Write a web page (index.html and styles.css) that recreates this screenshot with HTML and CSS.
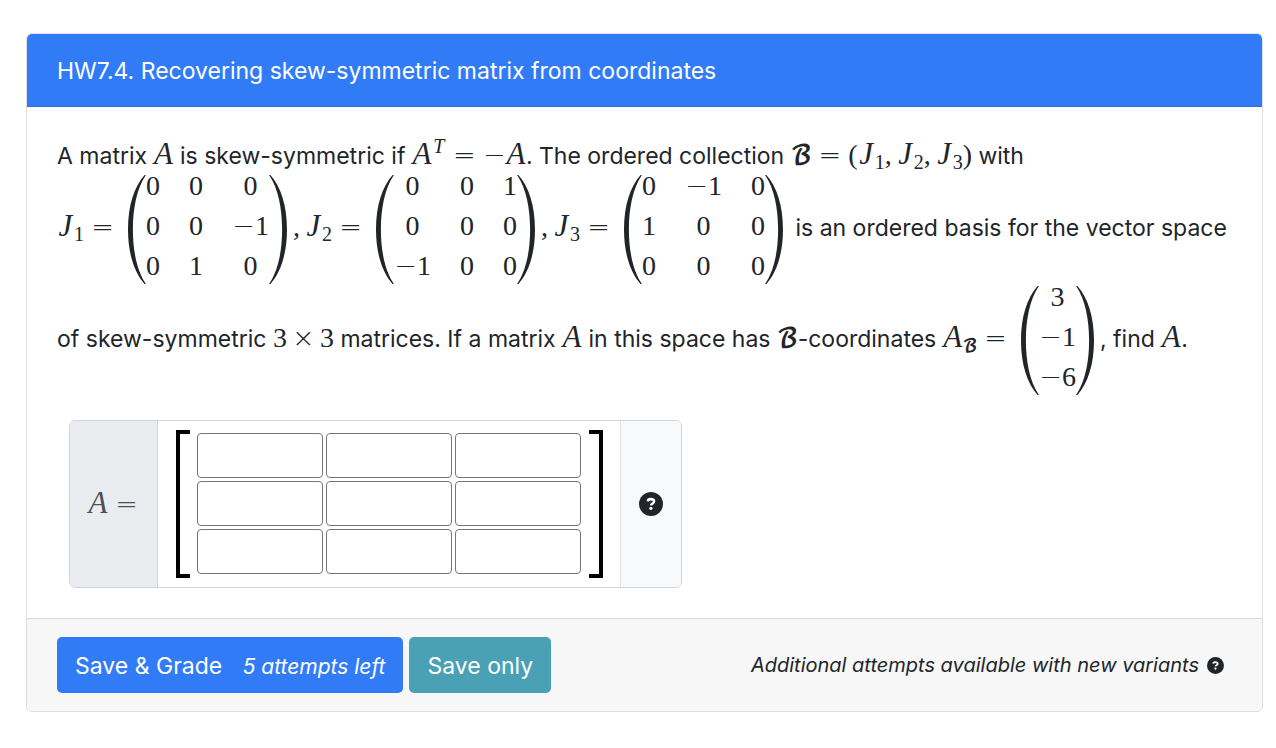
FILE: index.html
```html
<!DOCTYPE html>
<html lang="en">
<head>
<meta charset="UTF-8">
<meta name="viewport" content="width=device-width, initial-scale=1.0">
<title>HW7.4. Recovering skew-symmetric matrix from coordinates</title>
<link rel="stylesheet" href="styles.css">
</head>
<body>
<svg class="defs" aria-hidden="true">
  <symbol id="paren" viewBox="0 0 18 109">
    <path d="M16.6 0H17.9C8.500 14 4.900 34 4.900 54.500S8.500 95 17.900 109H16.600C6 97 0 78 0 54.500S6 12 16.600 0Z" fill="currentColor"/>
  </symbol>
  <symbol id="help" viewBox="0 0 512 512">
    <circle cx="256" cy="256" r="256" fill="currentColor"/>
    <path d="M188 200C190 168 214 152 252 152C296 152 322 170 322 202C322 244 262 244 256 286" fill="none" stroke="#fff" stroke-width="54"/>
    <circle cx="254" cy="348" r="34" fill="#fff"/>
  </symbol>
</svg>
<form class="card">
  <div class="card-header"><h1>HW7.4. Recovering skew-symmetric matrix from coordinates</h1></div>
  <div class="card-body">
    <p class="question">
      A matrix <span class="math"><i>A</i></span> is skew-symmetric if
      <span class="math"><i>A</i><sup><i>T</i></sup><span class="rel">=</span><span class="minus">−</span><i>A</i></span>. The ordered collection
      <span class="math"><span class="cal">ℬ</span><span class="rel">=</span>(<i class="j">J</i><sub>1</sub><span class="comma">,</span><i class="j">J</i><sub>2</sub><span class="comma">,</span><i class="j">J</i><sub>3</sub>)</span> with
      <span class="math"><i class="j">J</i><sub>1</sub><span class="rel">=</span><span class="matrix">
        <svg class="paren"><use href="#paren"/></svg>
        <span class="cells">
          <span>0</span><span>0</span><span>0</span>
          <span>0</span><span>0</span><span><span class="minus">−</span>1</span>
          <span>0</span><span>1</span><span>0</span>
        </span>
        <svg class="paren right"><use href="#paren"/></svg>
      </span><span class="comma">,</span><i class="j">J</i><sub>2</sub><span class="rel">=</span><span class="matrix">
        <svg class="paren"><use href="#paren"/></svg>
        <span class="cells">
          <span>0</span><span>0</span><span>1</span>
          <span>0</span><span>0</span><span>0</span>
          <span><span class="minus">−</span>1</span><span>0</span><span>0</span>
        </span>
        <svg class="paren right"><use href="#paren"/></svg>
      </span><span class="comma">,</span><i class="j">J</i><sub>3</sub><span class="rel">=</span><span class="matrix">
        <svg class="paren"><use href="#paren"/></svg>
        <span class="cells">
          <span>0</span><span><span class="minus">−</span>1</span><span>0</span>
          <span>1</span><span>0</span><span>0</span>
          <span>0</span><span>0</span><span>0</span>
        </span>
        <svg class="paren right"><use href="#paren"/></svg>
      </span></span>
      is an ordered basis for the vector space of skew-symmetric <span class="math">3<span class="times">×</span>3</span> matrices. If a matrix
      <span class="math"><i>A</i></span> in this space has <span class="math"><span class="cal">ℬ</span></span>-coordinates
      <span class="math"><i>A</i><sub><span class="cal">ℬ</span></sub><span class="rel">=</span><span class="matrix">
        <svg class="paren"><use href="#paren"/></svg>
        <span class="cells column">
          <span>3</span>
          <span><span class="minus">−</span>1</span>
          <span><span class="minus">−</span>6</span>
        </span>
        <svg class="paren right"><use href="#paren"/></svg>
      </span></span>, find <span class="math"><i>A</i></span>.
    </p>

    <div class="answer">
      <div class="answer-label"><span class="math"><i>A</i><span class="rel">=</span></span></div>
      <div class="answer-matrix">
        <span class="bracket"></span>
        <div class="inputs">
          <input type="text" name="a11" aria-label="Row 1, column 1">
          <input type="text" name="a12" aria-label="Row 1, column 2">
          <input type="text" name="a13" aria-label="Row 1, column 3">
          <input type="text" name="a21" aria-label="Row 2, column 1">
          <input type="text" name="a22" aria-label="Row 2, column 2">
          <input type="text" name="a23" aria-label="Row 2, column 3">
          <input type="text" name="a31" aria-label="Row 3, column 1">
          <input type="text" name="a32" aria-label="Row 3, column 2">
          <input type="text" name="a33" aria-label="Row 3, column 3">
        </div>
        <span class="bracket close"></span>
      </div>
      <button type="button" class="answer-help" aria-label="Help"><svg class="icon"><use href="#help"/></svg></button>
    </div>
  </div>
  <div class="card-footer">
    <button type="submit" class="btn btn-primary">Save &amp; Grade <em>5 attempts left</em></button>
    <button type="submit" class="btn btn-info">Save only</button>
    <span class="variants"><em>Additional attempts available with new variants</em>
      <button type="button" class="variants-help" aria-label="About variants"><svg class="icon"><use href="#help"/></svg></button>
    </span>
  </div>
</form>
</body>
</html>
```
FILE: styles.css
```css
* { box-sizing:border-box; }
body { margin:0; padding:33px 13px 33px 26px; background:#fff; color:#212529; font-family:Inter,"Liberation Sans",sans-serif; font-size:23px; line-height:36px; }
button, input { font:inherit; }
.defs { display:none; }

.card { border:1px solid #dfdfdf; border-radius:6px; overflow:hidden; }
.card-header { padding:19px 30px 17px; background:#317bf7; border-bottom:1px solid #2b6fde; color:#fff; }
.card-header h1 { margin:0; font-size:23px; font-weight:400; line-height:36px; }
.card-body { padding:31px 30px 30px; }
.card-footer { display:flex; align-items:center; gap:6px; padding:18px 30px; background:#f7f7f7; border-top:1px solid #d9d9d9; }

.question { margin:0 0 24px; }
.math { font-family:"Liberation Serif",serif; font-size:28px; line-height:30px; white-space:nowrap; }
.math i { display:inline-block; min-width:20px; font-size:31px; line-height:28px; text-align:center; }
.math .j { min-width:17px; }
.math sub, .math sup { font-size:20px; line-height:0; }
.math sub { vertical-align:-5px; }
.math sup { vertical-align:11px; }
.math sup i { min-width:14px; font-size:20px; line-height:14px; }
.rel, .minus, .times { display:inline-block; width:23px; font-family:"DejaVu Sans",sans-serif; font-size:27px; font-weight:200; line-height:28px; text-align:center; }
.rel { margin:0 7px; }
.times { margin:0 5px; }
.comma { margin-right:5px; }
.cal { font-family:"DejaVu Math TeX Gyre","DejaVu Sans",serif; font-size:26px; font-weight:700; }
.math sub .cal { font-size:18px; }
.matrix { display:inline-flex; align-items:center; height:111px; vertical-align:middle; }
.paren { width:18px; height:109px; margin-left:7px; }
.paren.right { margin:0 6px 0 0; transform:scaleX(-1); }
.cells { display:grid; grid-template-columns:repeat(3,auto); column-gap:29px; padding-bottom:7px; line-height:40px; text-align:center; }
.cells.column { grid-template-columns:auto; }

.answer { display:flex; width:fit-content; height:168px; margin-left:12px; border:1px solid #ced4da; border-radius:6px; overflow:hidden; }
.answer-label { display:flex; align-items:center; padding:0 12px 0 18px; background:#eaecef; border-right:1px solid #ced4da; color:#495057; }
.answer-matrix { display:flex; align-items:center; gap:7px; padding:0 17px 0 18px; }
.bracket { width:14px; height:148px; border:4px solid #000; border-right:0; }
.bracket.close { border-right:4px solid #000; border-left:0; }
.inputs { display:grid; grid-template-columns:repeat(3,126px); gap:3px; margin-right:1px; padding-bottom:1px; }
.inputs input { width:100%; height:45px; padding:2px 6px; background:#fff; border:1px solid #767676; border-radius:4px; }
.answer-help { width:61px; padding:0; background:#f8f9fb; border:0; border-left:1px solid #dee2e6; color:#212529; }
.icon { display:block; width:24px; height:24px; margin:0 auto; }

.btn { height:56px; padding:2px 18px 0; border:0; border-radius:5px; color:#fff; }
.btn em { margin-left:14px; font-size:21px; }
.btn-primary { background:#317bf7; }
.btn-info { background:#4aa0b5; }
.variants { display:flex; align-items:center; margin-left:auto; font-size:20px; }
.variants-help { padding:0 8px; background:none; border:0; color:#212529; }
.variants-help .icon { width:17px; height:17px; }
```
